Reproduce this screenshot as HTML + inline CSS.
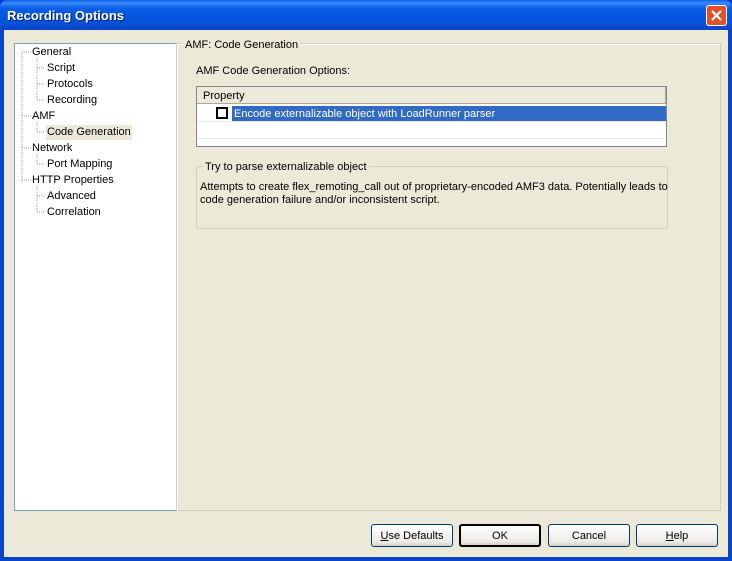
<!DOCTYPE html>
<html><head><style>
*{box-sizing:border-box;margin:0;padding:0}
body{width:732px;height:561px;overflow:hidden;font-family:"Liberation Sans",Arial,sans-serif;font-size:11px;background:#0831d9;position:relative;color:#000}
.win{position:absolute;left:0;top:0;width:732px;height:561px;border-radius:7px 7px 0 0;background:linear-gradient(#0a5ee8 0,#3a8cf7 3px,#0d5fe6 8px,#0455de 18px,#0b4fd4 26px,#0a44c8 29px);}
.title{position:absolute;left:7px;top:8px;color:#fff;font-weight:bold;font-size:13px;font-family:"Liberation Sans",sans-serif;text-shadow:1px 1px #0a1e6e}
.close{position:absolute;left:706px;top:5px;width:21px;height:21px;border:1px solid #fff;border-radius:3px;background:#e0502a}
.client{position:absolute;left:4px;top:30px;width:724px;height:527px;background:#ece9d8}
.abs{position:absolute}
.tree{left:14px;top:43px;width:163px;height:468px;background:#fff;border:1px solid #7f9db9;border-right:none}
.tree div{position:absolute;white-space:nowrap;line-height:13px}
.frame{left:176px;top:43px;width:545px;height:468px;border:1px solid #d0d0bf;box-shadow:inset 1px 1px #fff}
.legend{background:#ece9d8;padding:0 2px}
.table{left:196px;top:86px;width:471px;height:61px;background:#fff;border:1px solid #828790}
.btn{position:absolute;top:524px;width:82px;height:23px;border:1px solid #003c74;border-radius:3px;background:linear-gradient(#fff,#ecebe6 80%,#d6d0c5);text-align:center;line-height:22px}
.grp{left:196px;top:166px;width:472px;height:63px;border:1px solid #d0d0bf;border-radius:3px}
</style></head><body>
<div class="win"></div>
<div class="title">Recording Options</div>
<div class="close"><svg width="19" height="19" viewBox="0 0 19 19"><path d="M5 5L14 14M14 5L5 14" stroke="#fff" stroke-width="2.2"/></svg></div>
<div class="client"></div>
<div class="abs tree">
<svg class="abs" style="position:absolute;left:0;top:0" width="60" height="200"><g stroke="#a0a0a0" stroke-dasharray="1 1" fill="none">
<path d="M7 8V137M7 8H17M7 72H17M7 104H17M7 136H17M22 14V56M22 24H30M22 40H30M22 56H30M22 78V88M22 88H30M22 110V120M22 120H30M22 142V168M22 152H30M22 168H30"/></g></svg>
<div style="left:17px;top:2px">General</div>
<div style="left:32px;top:18px">Script</div>
<div style="left:32px;top:34px">Protocols</div>
<div style="left:32px;top:50px">Recording</div>
<div style="left:17px;top:66px">AMF</div>
<div style="left:31px;top:81px;background:#ece9d8;padding:1px 1px;height:15px">Code Generation</div>
<div style="left:17px;top:98px">Network</div>
<div style="left:32px;top:114px">Port Mapping</div>
<div style="left:17px;top:130px">HTTP Properties</div>
<div style="left:32px;top:146px">Advanced</div>
<div style="left:32px;top:162px">Correlation</div>
</div>
<div class="abs frame"></div>
<div class="abs legend" style="left:183px;top:39px">AMF: Code Generation</div>
<div class="abs" style="left:196px;top:65px">AMF Code Generation Options:</div>
<div class="abs table">
<div class="abs" style="left:0;top:0;width:469px;height:17px;background:#ece9d8;border-bottom:1px solid #aca899;box-shadow:inset -1px 0 #aca899;padding:3px 6px 0">Property</div>
<div class="abs" style="left:19px;top:20px;width:12px;height:12px;border:2px solid #000"></div>
<div class="abs" style="left:35px;top:19px;width:434px;height:15px;background:#316ac5;color:#fff;padding:2px 2px 0">Encode externalizable object with LoadRunner parser</div>
<div class="abs" style="left:0;top:34px;width:469px;height:1px;background:#ece9d8"></div>
<div class="abs" style="left:0;top:51px;width:469px;height:1px;background:#ece9d8"></div>
</div>
<div class="abs grp"></div>
<div class="abs legend" style="left:203px;top:161px">Try to parse externalizable object</div>
<div class="abs" style="left:200px;top:181px;line-height:13px;width:470px">Attempts to create flex_remoting_call out of proprietary-encoded AMF3 data. Potentially leads to code generation failure and/or inconsistent script.</div>
<div class="btn" style="left:371px"><u>U</u>se Defaults</div>
<div class="btn" style="left:459px;border:2px solid #000;line-height:20px">OK</div>
<div class="btn" style="left:548px">Cancel</div>
<div class="btn" style="left:636px"><u>H</u>elp</div>
</body></html>
